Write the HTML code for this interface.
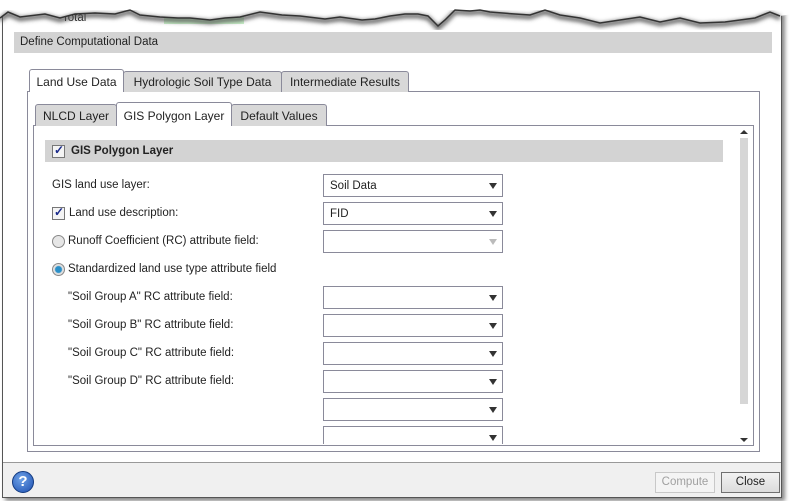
<!DOCTYPE html>
<html><head><meta charset="utf-8"><style>
*{box-sizing:border-box;margin:0;padding:0}
body{width:792px;height:501px;background:#fff;font-family:"Liberation Sans",sans-serif;font-size:11.5px;color:#222;position:relative;overflow:hidden}
.a{position:absolute}
.tab{position:absolute;border:1px solid #8a8a9a;border-bottom:none;border-radius:3px 3px 0 0;background:#d8d8d8;text-align:center;font-size:12px}
.sel{background:#fff}
.combo{position:absolute;left:323px;width:180px;height:23px;border:1px solid #8a8a9a;background:#fff;padding:5px 6px;font-size:11.5px}
.combo:after{content:"";position:absolute;right:5px;top:8px;border-left:4.5px solid transparent;border-right:4.5px solid transparent;border-top:6px solid #333}
.combo.dis:after{border-top-color:#bbb}
.lbl{position:absolute;font-size:11.5px}
.chk{position:absolute;width:13px;height:13px;border:1px solid #777;background:#f4f4f4}
.chk:after{content:"✓";position:absolute;left:1px;top:-3px;font-size:12px;color:#1a2a8a;font-weight:bold}
.rad{position:absolute;width:13px;height:13px;border:1px solid #888;border-radius:50%;background:#e6e6e6}
</style></head><body>
<div class="a" style="left:2px;top:10px;width:780px;height:488px;border:1px solid #555;border-top:none;box-shadow:3px 3px 4px #888;background:#fff"></div>
<div class="a" style="left:62px;top:12px;font-size:11.5px">Total</div>
<div class="a" style="left:164px;top:14px;width:80px;height:10px;background:#c8f0c8"></div>
<svg class="a" style="left:0;top:0" width="792" height="34"><defs><filter id="b"><feGaussianBlur stdDeviation="2"/></filter></defs>
<path d="M0 0H792V14L780 16 770 12 755 18 740 20 725 22 700 23 680 18 660 22 640 17 620 20 600 23 580 18 560 15 545 10 530 15 515 14 490 12 480 10 470 11 455 10 445 20 438 26 428 16 418 14 405 14 390 16 375 19 362 20 340 17 325 19 300 16 282 15 260 12 240 17 225 18 210 20 190 18 178 18 160 17 140 15 130 10 115 14 95 13 75 14 60 18 45 14 20 17 8 12 0 18Z" fill="#fff"/>
<path d="M0 20L8 14 20 19 45 16 60 20 75 16 95 15 115 16 130 12 140 17 160 19 178 20 190 20 210 22 225 20 240 19 260 14 282 17 300 18 325 21 340 19 362 22 375 21 390 18 405 16 418 16 428 18 438 28 445 22 455 12 470 13 480 12 490 14 515 16 530 17 545 12 560 17 580 20 600 25 620 22 640 19 660 24 680 20 700 25 725 24 740 22 755 20 770 14 780 18" fill="none" stroke="#555" stroke-width="4" filter="url(#b)"/>
<path d="M0 18L8 12 20 17 45 14 60 18 75 14 95 13 115 14 130 10 140 15 160 17 178 18 190 18 210 20 225 18 240 17 260 12 282 15 300 16 325 19 340 17 362 20 375 19 390 16 405 14 418 14 428 16 438 26 445 20 455 10 470 11 480 10 490 12 515 14 530 15 545 10 560 15 580 18 600 23 620 20 640 17 660 22 680 18 700 23 725 22 740 20 755 18 770 12 780 16" fill="none" stroke="#333" stroke-width="1.5"/></svg>
<div class="a" style="left:14px;top:32px;width:758px;height:21px;background:#d3d3d3;padding:4px 6px;font-size:11.5px">Define Computational Data</div>
<div class="a" style="left:27px;top:91px;width:733px;height:361px;border:1px solid #8a8a9a"></div>
<div class="tab" style="left:123px;top:71px;width:159px;height:21px;padding-top:3px">Hydrologic Soil Type Data</div>
<div class="tab" style="left:281px;top:71px;width:128px;height:21px;padding-top:3px">Intermediate Results</div>
<div class="tab sel" style="left:29px;top:69px;width:95px;height:23px;padding-top:5px">Land Use Data</div>
<div class="a" style="left:33px;top:125px;width:721px;height:321px;border:1px solid #8a8a9a"></div>
<div class="tab" style="left:35px;top:104px;width:82px;height:22px;padding-top:4px">NLCD Layer</div>
<div class="tab" style="left:231px;top:104px;width:96px;height:22px;padding-top:4px">Default Values</div>
<div class="tab sel" style="left:116px;top:102px;width:116px;height:24px;padding-top:6px">GIS Polygon Layer</div>
<div class="a" style="left:740px;top:138px;width:8px;height:266px;background:#d6d6d6"></div>
<div class="a" style="left:740px;top:130px;border-left:4px solid transparent;border-right:4px solid transparent;border-bottom:4px solid #333"></div>
<div class="a" style="left:740px;top:438px;border-left:4px solid transparent;border-right:4px solid transparent;border-top:4px solid #333"></div>
<div class="a" style="left:45px;top:140px;width:678px;height:22px;background:#d3d3d3"></div>
<div class="chk" style="left:52px;top:145px"></div>
<div class="lbl" style="left:71px;top:145px;font-weight:bold">GIS Polygon Layer</div>
<div class="lbl" style="left:52px;top:179px">GIS land use layer:</div>
<div class="combo" style="top:174px">Soil Data</div>
<div class="chk" style="left:52px;top:207px"></div>
<div class="lbl" style="left:69px;top:207px">Land use description:</div>
<div class="combo" style="top:202px">FID</div>
<div class="rad" style="left:52px;top:235px"></div>
<div class="lbl" style="left:68px;top:235px">Runoff Coefficient (RC) attribute field:</div>
<div class="combo dis" style="top:230px"></div>
<div class="rad" style="left:52px;top:263px;background:radial-gradient(circle,#2a8fc8 3px,#e0e0e0 4px)"></div>
<div class="lbl" style="left:68px;top:263px">Standardized land use type attribute field</div>
<div class="lbl" style="left:68px;top:291px">"Soil Group A" RC attribute field:</div>
<div class="combo" style="top:286px"></div>
<div class="lbl" style="left:68px;top:319px">"Soil Group B" RC attribute field:</div>
<div class="combo" style="top:314px"></div>
<div class="lbl" style="left:68px;top:347px">"Soil Group C" RC attribute field:</div>
<div class="combo" style="top:342px"></div>
<div class="lbl" style="left:68px;top:375px">"Soil Group D" RC attribute field:</div>
<div class="combo" style="top:370px"></div>
<div class="combo" style="top:398px"></div>
<div class="combo" style="top:426px;height:18px;border-bottom:none"></div>
<div class="a" style="left:3px;top:462px;width:778px;height:35px;background:#f0f0f0;border-top:1px solid #999"></div>
<div class="a" style="left:12px;top:471px;width:22px;height:22px;border-radius:50%;background:radial-gradient(circle at 40% 35%,#6fa3e8,#1d4fb0);border:1px solid #123a80;color:#fff;font-weight:bold;font-size:15px;text-align:center;line-height:20px">?</div>
<div class="a" style="left:655px;top:472px;width:60px;height:21px;border:1px solid #c8c8c8;background:#f4f4f4;color:#a0a0a0;text-align:center;line-height:19px;font-size:11.5px">Compute</div>
<div class="a" style="left:721px;top:472px;width:59px;height:21px;border:1px solid #707070;background:linear-gradient(#f2f2f2,#dcdcdc);text-align:center;line-height:19px;font-size:11.5px">Close</div>
</body></html>
